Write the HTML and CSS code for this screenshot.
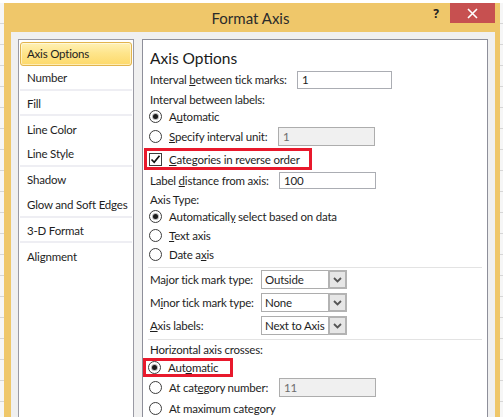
FILE: index.html
```html
<!DOCTYPE html>
<html>
<head>
<meta charset="utf-8">
<link rel="stylesheet" href="styles.css">
</head>
<body>
<div class="screen">
  <div class="xl-top"></div>
  <div class="main">
    <div class="xl-left"></div>
    <div class="dialog">
      <div class="titlebar">
        <div class="tb-spacer"></div>
        <div class="title">Format Axis</div>
        <div class="tb-right">
          <span class="help">?</span>
          <span class="close">
            <svg width="11" height="11" viewBox="0 0 11 11"><path d="M1 1L10 10M10 1L1 10" stroke="#fff" stroke-width="1.6" fill="none"/></svg>
          </span>
        </div>
      </div>
      <div class="dlg-body">
        <div class="cats">
          <div class="cat sel">Axis Options</div>
          <div class="cat sep">Number</div>
          <div class="cat sep">Fill</div>
          <div class="cat">Line Color</div>
          <div class="cat sep">Line Style</div>
          <div class="cat">Shadow</div>
          <div class="cat sep">Glow and Soft Edges</div>
          <div class="cat sep">3-D Format</div>
          <div class="cat">Alignment</div>
        </div>
        <div class="pane">
          <div class="r r-22 heading">Axis Options</div>
          <div class="r r-21"><span class="lbl w-147">Interval <u>b</u>etween tick marks:</span><span class="field f-tick">1</span></div>
          <div class="r r-18">Interval between labels:</div>
          <div class="r r-17 opt"><span class="radio on"></span><span>A<u>u</u>tomatic</span></div>
          <div class="r r-23 opt"><span class="radio"></span><span class="lbl w-109"><u>S</u>pecify interval unit:</span><span class="field dis f-wide">1</span></div>
          <div class="r r-22"><span class="mark mark-cat"><span class="check"><svg width="11" height="11" viewBox="0 0 11 11"><path d="M1.5 5.5L4.2 8.3L9.5 1.8" stroke="#111" stroke-width="1.7" fill="none"/></svg></span><span><u>C</u>ategories in reverse order</span></span></div>
          <div class="r r-20"><span class="lbl w-129">Label <u>d</u>istance from axis:</span><span class="field f-wide f-short">100</span></div>
          <div class="r r-18">Axis Type:</div>
          <div class="r r-17 opt"><span class="radio on"></span><span>Automaticall<u>y</u> select based on data</span></div>
          <div class="r r-20 opt"><span class="radio"></span><span><u>T</u>ext axis</span></div>
          <div class="r r-18 opt"><span class="radio"></span><span>Date a<u>x</u>is</span></div>
          <div class="sep-line s-4"></div>
          <div class="r r-23"><span class="lbl w-111">Ma<u>j</u>or tick mark type:</span><span class="select"><span class="sel-val">Outside</span><span class="sel-btn"><svg width="9" height="6" viewBox="0 0 9 6"><path d="M1 1L4.5 4.5L8 1" stroke="#555" stroke-width="1.8" fill="none"/></svg></span></span></div>
          <div class="r r-23"><span class="lbl w-111">M<u>i</u>nor tick mark type:</span><span class="select"><span class="sel-val">None</span><span class="sel-btn"><svg width="9" height="6" viewBox="0 0 9 6"><path d="M1 1L4.5 4.5L8 1" stroke="#555" stroke-width="1.8" fill="none"/></svg></span></span></div>
          <div class="r r-23"><span class="lbl w-111"><u>A</u>xis labels:</span><span class="select"><span class="sel-val">Next to Axis</span><span class="sel-btn"><svg width="9" height="6" viewBox="0 0 9 6"><path d="M1 1L4.5 4.5L8 1" stroke="#555" stroke-width="1.8" fill="none"/></svg></span></span></div>
          <div class="sep-line s-2"></div>
          <div class="r r-18">Horizontal axis crosses:</div>
          <div class="r r-18"><span class="mark mark-auto"><span class="radio on"></span><span>Aut<u>o</u>matic</span></span></div>
          <div class="r r-22 opt"><span class="radio"></span><span class="lbl w-110">At cat<u>e</u>gory number:</span><span class="field dis f-wide">11</span></div>
          <div class="r r-20 opt"><span class="radio"></span><span>At maximum cate<u>g</u>ory</span></div>
        </div>
      </div>
    </div>
    <div class="xl-right"></div>
  </div>
</div>
</body>
</html>
```
FILE: styles.css
```css
html, body {
  margin: 0;
  padding: 0;
}
body {
  width: 503px;
  height: 417px;
  overflow: hidden;
  background: #f4f4f4;
  font-family: "Lato", "Noto Sans", "Liberation Sans", sans-serif;
  font-size: 11.5px;
  letter-spacing: -0.2px;
  color: #1e1e1e;
}
.screen {
  display: flex;
  flex-direction: column;
  height: 417px;
}
.xl-top {
  height: 3px;
  background: #ffffff;
  flex: none;
}
.main {
  display: flex;
  flex: 1;
  min-height: 0;
}
.xl-left {
  width: 4px;
  flex: none;
  background: repeating-linear-gradient(#f6f6f6 0 20px, #d6d6d6 20px 21px);
}
.xl-right {
  width: 3px;
  flex: none;
  background: repeating-linear-gradient(#f6f6f6 0 20px, #d6d6d6 20px 21px);
}
.dialog {
  width: 496px;
  flex: none;
  box-sizing: border-box;
  background: #efc76a;
  padding: 0 5px 0 7px;
  display: flex;
  flex-direction: column;
}
.titlebar {
  height: 29px;
  flex: none;
  display: grid;
  grid-template-columns: 1fr auto 1fr;
  margin: 0 -5px 0 -7px;
  padding-right: 5px;
}
.title {
  align-self: center;
  font-size: 15px;
  letter-spacing: 0;
  color: #2b2b2b;
  padding-top: 1px;
  padding-left: 2px;
  white-space: nowrap;
}
.tb-right {
  display: flex;
  justify-content: flex-end;
  align-items: flex-start;
}
.help {
  font-family: "Noto Sans", "Liberation Sans", sans-serif;
  font-weight: bold;
  font-size: 12px;
  letter-spacing: 0;
  color: #222;
  margin-top: 4px;
  margin-right: 11px;
  line-height: 14px;
}
.close {
  width: 45px;
  height: 20px;
  background: #c75050;
  display: flex;
  align-items: center;
  justify-content: center;
}
.dlg-body {
  flex: 1;
  background: #f0f0f0;
  display: flex;
  gap: 8px;
  padding: 7px 7px 0 7px;
  overflow: hidden;
  min-height: 0;
}
.cats {
  width: 116px;
  height: 400px;
  flex: none;
  box-sizing: border-box;
  background: #fff;
  border: 1px solid #9a9aa4;
  padding: 2px 1px;
}
.cat {
  height: 25.4px;
  box-sizing: border-box;
  display: flex;
  align-items: center;
  padding-left: 7px;
  border: 1px solid transparent;
  border-left: 0;
  border-right: 0;
  color: #1e1e1e;
  white-space: nowrap;
}
.cat.sep {
  border-bottom: 2px solid #eeeef3;
}
.cat.sel {
  height: 23.6px;
  padding-left: 6px;
  border: 1px solid #e2b44c;
  border-radius: 3px;
  background: linear-gradient(#fff1b5 0%, #fee58c 45%, #fdd96a 100%);
  box-shadow: inset 0 0 0 1px rgba(255, 255, 255, 0.5);
}
.pane {
  width: 346px;
  height: 400px;
  flex: none;
  box-sizing: border-box;
  background: #fff;
  border: 1px solid #8e8f9a;
  padding: 7px 0 0 7px;
}
.r {
  display: flex;
  align-items: center;
  white-space: nowrap;
}
.r-17 { height: 17px; }
.r-18 { height: 18px; }
.r-20 { height: 20px; }
.r-21 { height: 21px; }
.r-22 { height: 22px; }
.r-23 { height: 23px; }
.heading {
  font-size: 15.5px;
  letter-spacing: 0;
  color: #1a1a1a;
}
.opt {
  margin-left: -1px;
}
.lbl {
  flex: none;
}
.w-147 { width: 147px; }
.w-109 { width: 109px; }
.w-110 { width: 110px; }
.w-111 { width: 111px; }
.w-129 { width: 129px; }
.field {
  box-sizing: border-box;
  width: 95px;
  height: 18px;
  border: 1px solid #abadb3;
  background: #fff;
  padding-left: 4px;
  display: flex;
  align-items: center;
}
.field.f-wide {
  width: 97px;
  height: 19px;
}
.field.f-short {
  height: 17px;
}
.field.dis {
  background: #f0f0f0;
  border-color: #adadad;
  color: #6d6d6d;
}
.radio {
  width: 13px;
  height: 13px;
  box-sizing: border-box;
  border-radius: 50%;
  border: 1px solid #3c3c3c;
  background: #fff;
  margin-right: 7px;
  flex: none;
  display: flex;
  align-items: center;
  justify-content: center;
}
.radio.on::after {
  content: "";
  width: 5px;
  height: 5px;
  border-radius: 50%;
  background: #1a1a1a;
  box-shadow: 0 0 0 1px rgba(60, 60, 60, 0.35);
}
.check {
  width: 13px;
  height: 13px;
  box-sizing: border-box;
  border: 1px solid #3c3c3c;
  background: #fff;
  margin-right: 7px;
  flex: none;
  display: flex;
  align-items: center;
  justify-content: center;
}
.mark {
  box-sizing: border-box;
  border: 3px solid #e8192c;
  display: flex;
  align-items: center;
  padding-left: 2px;
}
.mark-cat {
  width: 168px;
  height: 22px;
  margin-left: -6px;
}
.mark-auto {
  width: 90px;
  height: 19px;
  margin-left: -7px;
}
.sep-line {
  height: 1px;
  background: #e3e3e3;
  width: 334px;
  margin-left: -2px;
}
.s-4 { margin-top: 4px; }
.s-2 { margin-top: 2px; }
.select {
  width: 86px;
  height: 19px;
  box-sizing: border-box;
  border: 1px solid #adadad;
  display: flex;
  background: #fff;
}
.sel-val {
  flex: 1;
  padding-left: 3px;
  display: flex;
  align-items: center;
  overflow: hidden;
  white-space: nowrap;
}
.sel-btn {
  width: 19px;
  flex: none;
  margin: -1px -1px -1px 0;
  box-sizing: border-box;
  border: 2px solid #b3b3b3;
  background: #e6e6e6;
  display: flex;
  align-items: center;
  justify-content: center;
}
```
